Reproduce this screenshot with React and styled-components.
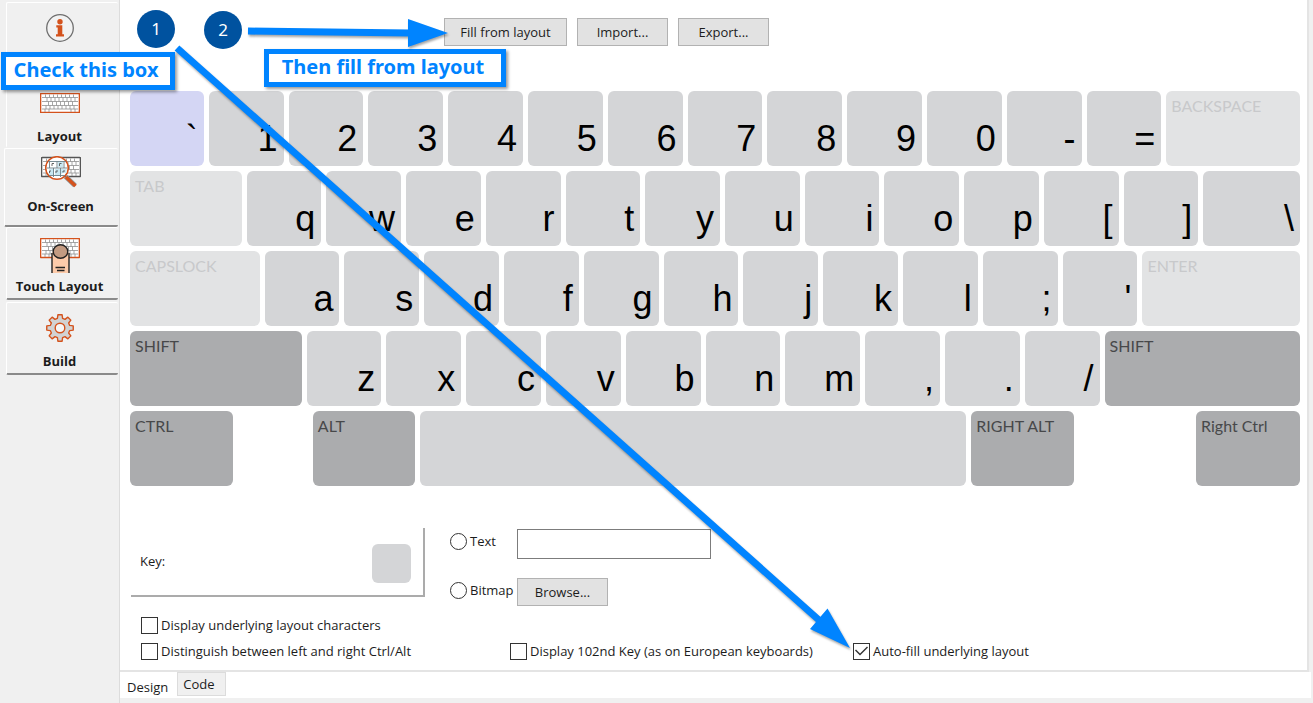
import React from "react";
import styled, { createGlobalStyle, css } from "styled-components";

const UI_FONT = '"Open Sans", "Noto Sans", sans-serif';
const BLUE = "#0084ff";
const ORANGE = "#d4521c";

const GlobalStyle = createGlobalStyle`
  * { box-sizing: border-box; }
  body {
    margin: 0;
    background: #f0f0f0;
    color: #1c1c1c;
    font: 13px/18px ${UI_FONT};
  }
  button, input { font: inherit; color: inherit; }
`;

const Window = styled.div`
  position: relative;
  display: flex;
  min-height: 100vh;
  overflow: hidden;
`;

const Sidebar = styled.nav`
  flex: none;
  width: 119px;
  padding: 2px 1px 0 6px;
  display: flex;
  flex-direction: column;
`;

const SideButton = styled.button`
  display: flex;
  flex-direction: column;
  align-items: center;
  justify-content: space-between;
  height: 73px;
  padding: ${(p) => p.$pad || "10px 6px 3px 0"};
  border: 0;
  border-top: 1px solid #fff;
  border-left: 1px solid #fff;
  border-bottom: 2px solid ${(p) => (p.$flat ? "#f0f0f0" : "#8a8a8a")};
  border-radius: 2px;
  background: #f0f0f0;
  font-weight: 700;
  white-space: nowrap;
  ${(p) =>
    p.$raised &&
    css`
      height: 79px;
      margin: 0 0 0 -2px;
    `}
  ${(p) => p.$gap && css`margin-top: 2px;`}
`;

const Main = styled.main`
  flex: 1;
  min-width: 0;
  display: flex;
  flex-direction: column;
  padding-bottom: 5px;
  border-left: 1px solid #dcdcdc;
`;

const DesignPanel = styled.section`
  flex: 1;
  margin-right: 4px;
  padding: 18px 7px 0 10px;
  background: #fff;
  border-right: 2px solid #e4e4e4;
  border-bottom: 2px solid #e4e4e4;
`;

const Toolbar = styled.div`
  display: flex;
  gap: 10px;
  padding-left: 314px;
  margin-bottom: 45px;
`;

const PushButton = styled.button`
  height: 28px;
  min-width: ${(p) => (p.$wide ? 123 : 91)}px;
  padding: 0 10px;
  border: 1px solid #b2b2b2;
  background: #e2e2e2;
  white-space: nowrap;
`;

const Keyboard = styled.div`
  display: flex;
  flex-direction: column;
  gap: 5px;
`;

const KeyRow = styled.div`
  display: grid;
  grid-template-columns: ${(p) => p.$widths.map((w) => `minmax(0, ${w}fr)`).join(" ")};
  gap: 5px;
  height: 75px;
`;

const tones = {
  plain: ["#d4d5d7", "#000"],
  selected: ["#d4d6f4", "#000"],
  faint: ["#e2e3e4", "#c8c9cb"],
  dark: ["#abacae", "#47484a"],
};

const Key = styled.div`
  display: flex;
  align-items: flex-end;
  justify-content: flex-end;
  padding: 7px 6px;
  border-radius: 6px;
  background: ${(p) => tones[p.$tone][0]};
  color: ${(p) => tones[p.$tone][1]};
  font: 36px/40px "Liberation Sans", Arial, sans-serif;
`;

const NamedKey = styled(Key)`
  align-items: flex-start;
  justify-content: flex-start;
  padding: 5px;
  font: 16px/20px Lato, sans-serif;
  white-space: nowrap;
`;

const Details = styled.div`
  display: flex;
  align-items: flex-start;
  margin-top: 42px;
`;

const KeyPreview = styled.div`
  display: flex;
  align-items: flex-end;
  justify-content: space-between;
  width: 294px;
  height: 69px;
  margin-left: 1px;
  padding: 0 12px 12px 9px;
  line-height: 44px;
  border-right: 2px solid #ababab;
  border-bottom: 2px solid #ababab;
`;

const PreviewCap = styled.div`
  width: 39px;
  height: 39px;
  border-radius: 6px;
  background: #d4d5d7;
`;

const ContentFields = styled.div`
  display: grid;
  grid-template-columns: 67px auto;
  row-gap: 19px;
  padding: 1px 0 0 25px;
  justify-items: start;
`;

const TextBox = styled.input`
  width: 194px;
  height: 30px;
  padding: 0 4px;
  border: 1px solid #7c7c7c;
  border-radius: 0;
  background: #fff;
`;

const Choice = styled.label`
  display: flex;
  align-items: center;
  gap: 3px;
  height: 24px;
  white-space: nowrap;
`;

const Mark = styled.input`
  appearance: none;
  flex: none;
  width: 17px;
  height: 17px;
  margin: 0;
  border: 1px solid #333;
  border-radius: ${(p) => (p.type === "radio" ? "50%" : 0)};
  background: #fff;
  &:checked::after {
    content: "";
    display: block;
    width: 15px;
    height: 15px;
    background: #333;
    clip-path: ${(p) =>
      p.type === "radio"
        ? "circle(4px)"
        : "polygon(1px 7px, 2px 6px, 6px 10px, 13px 3px, 14px 4px, 6px 12px)"};
  }
`;

const Options = styled.div`
  display: grid;
  grid-template-columns: 369px 343px auto;
  row-gap: 2px;
  margin: 7px 0 7px 11px;
`;

const LastRowChoice = styled(Choice)`
  grid-row: 2;
`;

const TabStrip = styled.div`
  display: flex;
  align-items: flex-start;
  height: 26px;
  margin-right: 2px;
  background: #fff;
`;

const Tab = styled.button`
  height: ${(p) => (p.$active ? 26 : 24)}px;
  padding: ${(p) => (p.$active ? "3px 9px 0 7px" : "0 10px 0 5px")};
  border: ${(p) => (p.$active ? "0" : "1px solid #dcdcdc")};
  background: ${(p) => (p.$active ? "#fff" : "#f0f0f0")};
`;

const Callout = styled.div`
  position: absolute;
  left: ${(p) => p.$x}px;
  top: ${(p) => p.$y}px;
  width: ${(p) => p.$w}px;
  padding: 0 4px 2px 0;
  border: 5px solid ${BLUE};
  background: #fff;
  color: ${BLUE};
  box-shadow: 2px 2px 3px rgba(0, 0, 0, 0.4);
  font: 700 20px/26px "Noto Sans", sans-serif;
  text-align: center;
  white-space: nowrap;
`;

const StepBadge = styled.div`
  position: absolute;
  left: ${(p) => p.$x}px;
  top: ${(p) => p.$y}px;
  width: 38px;
  height: 38px;
  border-radius: 50%;
  background: #00529f;
  color: #fff;
  font: 17px/38px "Noto Sans", sans-serif;
  text-align: center;
`;

const Arrows = styled.svg`
  position: absolute;
  left: 0;
  top: 0;
  pointer-events: none;
  filter: drop-shadow(1px 2px 1px rgba(0, 0, 0, 0.35));
`;

const KeyGrid = ({ frame }) => (
  <g>
    <rect x="0.5" y="0.5" width="39" height="19" rx="1" fill="#fff" stroke={frame} strokeWidth="1.6" />
    <path
      d="M2 4.5H38M2 8.5H38M2 12.5H38M2 16H38M5.5 1.5V4.5M9.5 1.5V4.5M13.5 1.5V4.5M17.5 1.5V4.5M21.5 1.5V4.5M25.5 1.5V4.5M29.5 1.5V4.5M33.5 1.5V4.5M7 4.5V8.5M11 4.5V8.5M15 4.5V8.5M19 4.5V8.5M23 4.5V8.5M27 4.5V8.5M31 4.5V8.5M35 4.5V8.5M8.5 8.5V12.5M12.5 8.5V12.5M16.5 8.5V12.5M20.5 8.5V12.5M24.5 8.5V12.5M28.5 8.5V12.5M32.5 8.5V12.5M6 12.5V16M10 12.5V16M14 12.5V16M18 12.5V16M22 12.5V16M26 12.5V16M30 12.5V16M34 12.5V16M5 16V19M9 16V19M31 16V19M35 16V19"
      fill="none"
      stroke="#909090"
      strokeWidth="0.8"
    />
  </g>
);

const InfoIcon = () => (
  <svg width="30" height="30" viewBox="0 0 30 30" aria-hidden="true">
    <circle cx="15" cy="15" r="13.3" fill="#f2f2f2" stroke="#6e6e6e" strokeWidth="1.3" />
    <circle cx="15" cy="8.7" r="2.7" fill={ORANGE} />
    <path d="M11.3 12.3H17.3V21.3H19V23.5H11V21.3H12.7V14.5H11.3Z" fill={ORANGE} />
  </svg>
);

const LayoutIcon = () => (
  <svg width="40" height="20" viewBox="0 0 40 20" aria-hidden="true">
    <KeyGrid frame={ORANGE} />
  </svg>
);

const OnScreenIcon = () => (
  <svg width="40" height="32" viewBox="0 0 40 32" aria-hidden="true">
    <g transform="translate(0 1)">
      <KeyGrid frame="#555" />
    </g>
    <path d="M24.5 20.5L34 29.5" stroke="#8f9aa0" strokeWidth="5" />
    <path d="M25 21L34.5 30" stroke={ORANGE} strokeWidth="3.6" />
    <circle cx="16" cy="12" r="11.3" fill="#fff" stroke={ORANGE} strokeWidth="1.5" />
    <path d="M17 6H22V11H17ZM8 13H13V19H8ZM14 13H19V20H14ZM20 13H25.5V17H22L20 18Z" fill="#c9e8f2" />
    <path d="M7 5.5H25M5.5 12H26.5M8 19.5H24M8.5 5.5V12M16 5.5V12M23 5.5V12M12.5 12V21M19.5 12V21" fill="none" stroke="#6b7f88" strokeWidth="0.9" />
    <path d="M11 10V7.5H13M18.5 10V7.5H20.5M8.5 17V15H10M15 17V15H17M22 16.5V15H24" fill="none" stroke="#555" strokeWidth="0.9" />
  </svg>
);

const TouchIcon = () => (
  <svg width="40" height="36" viewBox="0 0 40 36" aria-hidden="true">
    <KeyGrid frame={ORANGE} />
    <path d="M12 35V15A9 9 0 0 1 29 15V35Z" fill="#fdcbaa" />
    <path d="M12 35V15M29 15V35M15.5 29.5H25M17 32.5H24.5" stroke="#222" strokeWidth="1.4" fill="none" />
    <ellipse cx="20.5" cy="13.5" rx="7.3" ry="6.8" fill="#c39b82" stroke="#222" strokeWidth="1.4" />
  </svg>
);

const GearIcon = () => {
  const points = [];
  for (let i = 0; i < 8; i += 1) {
    [[-15, 10], [-9, 13.4], [9, 13.4], [15, 10]].forEach(([offset, radius]) => {
      const angle = ((i * 45 + offset) * Math.PI) / 180;
      points.push(`${15 + radius * Math.sin(angle)},${15 - radius * Math.cos(angle)}`);
    });
  }
  return (
    <svg width="30" height="30" viewBox="0 0 30 30" aria-hidden="true">
      <polygon points={points.join(" ")} fill="#d2d2d2" stroke={ORANGE} strokeWidth="1.4" strokeLinejoin="round" />
      <circle cx="15" cy="15" r="4.8" fill="#f6f6f6" stroke={ORANGE} strokeWidth="1.4" />
    </svg>
  );
};

const chars = (text) => text.split("").map((c) => ({ c, w: 75 }));

const rows = [
  [{ c: "`", w: 74, tone: "selected" }, ...chars("1234567890-="), { name: "BACKSPACE", w: 134, tone: "faint" }],
  [{ name: "TAB", w: 112, tone: "faint" }, ...chars("qwertyuiop[]"), { c: "\\", w: 97 }],
  [{ name: "CAPSLOCK", w: 130, tone: "faint" }, ...chars("asdfghjkl;'"), { name: "ENTER", w: 158, tone: "faint" }],
  [{ name: "SHIFT", w: 172, tone: "dark" }, ...chars("zxcvbnm,./"), { name: "SHIFT", w: 196, tone: "dark" }],
  [
    { name: "CTRL", w: 103, tone: "dark" },
    { gap: true, w: 70 },
    { name: "ALT", w: 102, tone: "dark" },
    { c: "", w: 547 },
    { name: "RIGHT ALT", w: 103, tone: "dark" },
    { gap: true, w: 112 },
    { name: "Right Ctrl", w: 104, tone: "dark" },
  ],
];

const renderKey = (key, index) => {
  if (key.gap) return <span key={index} />;
  if (key.name) {
    return (
      <NamedKey key={index} $tone={key.tone}>
        {key.name}
      </NamedKey>
    );
  }
  return (
    <Key key={index} $tone={key.tone || "plain"}>
      {key.c}
    </Key>
  );
};

export default function App() {
  return (
    <>
      <GlobalStyle />
      <Window>
        <Sidebar>
          <SideButton $flat aria-label="Details">
            <InfoIcon />
          </SideButton>
          <SideButton $flat $pad="17px 6px 1px 0">
            <LayoutIcon />
            Layout
          </SideButton>
          <SideButton $raised $pad="7px 2px 10px 0">
            <OnScreenIcon />
            On-Screen
          </SideButton>
          <SideButton $pad="10px 6px 3px 0">
            <TouchIcon />
            Touch Layout
          </SideButton>
          <SideButton $gap $pad="10px 6px 3px 0">
            <GearIcon />
            Build
          </SideButton>
        </Sidebar>
        <Main>
          <DesignPanel>
            <Toolbar>
              <PushButton $wide>Fill from layout</PushButton>
              <PushButton>Import...</PushButton>
              <PushButton>Export...</PushButton>
            </Toolbar>
            <Keyboard>
              {rows.map((row, index) => (
                <KeyRow key={index} $widths={row.map((key) => key.w)}>
                  {row.map(renderKey)}
                </KeyRow>
              ))}
            </Keyboard>
            <Details>
              <KeyPreview>
                Key:
                <PreviewCap />
              </KeyPreview>
              <ContentFields>
                <Choice>
                  <Mark type="radio" name="content" />
                  Text
                </Choice>
                <TextBox type="text" aria-label="Key text" />
                <Choice>
                  <Mark type="radio" name="content" />
                  Bitmap
                </Choice>
                <PushButton>Browse...</PushButton>
              </ContentFields>
            </Details>
            <Options>
              <Choice>
                <Mark type="checkbox" />
                Display underlying layout characters
              </Choice>
              <LastRowChoice>
                <Mark type="checkbox" />
                Distinguish between left and right Ctrl/Alt
              </LastRowChoice>
              <LastRowChoice>
                <Mark type="checkbox" />
                Display 102nd Key (as on European keyboards)
              </LastRowChoice>
              <LastRowChoice>
                <Mark type="checkbox" defaultChecked />
                Auto-fill underlying layout
              </LastRowChoice>
            </Options>
          </DesignPanel>
          <TabStrip>
            <Tab $active>Design</Tab>
            <Tab>Code</Tab>
          </TabStrip>
        </Main>
        <Callout $x={1} $y={52} $w={174}>Check this box</Callout>
        <Callout $x={264} $y={49} $w={242}>Then fill from layout</Callout>
        <StepBadge $x={137} $y={10}>1</StepBadge>
        <StepBadge $x={204} $y={11}>2</StepBadge>
        <Arrows width="860" height="660" viewBox="0 0 860 660" aria-hidden="true">
          <path d="M177 48L820 621M248 31L410 33" stroke={BLUE} strokeWidth="7" fill="none" />
          <path d="M850 648L827.5 608.5L810 629ZM448 33L408 19V47Z" fill={BLUE} />
        </Arrows>
      </Window>
    </>
  );
}
